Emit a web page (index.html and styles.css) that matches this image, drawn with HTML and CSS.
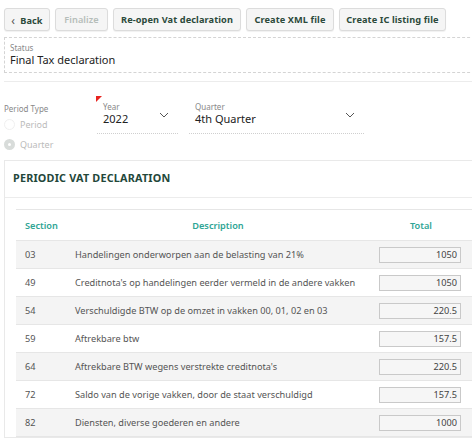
FILE: index.html
```html
<!DOCTYPE html>
<html>
<head>
<meta charset="utf-8">
<link rel="stylesheet" href="styles.css">
</head>
<body>
<div class="page">
  <div class="toolbar">
    <button class="btn b-back"><span class="chev">&#8249;</span>Back</button>
    <button class="btn b-fin disabled">Finalize</button>
    <button class="btn b-reopen">Re-open Vat declaration</button>
    <button class="btn b-xml">Create XML file</button>
    <button class="btn b-ic">Create IC listing file</button>
  </div>
  <div class="status">
    <div class="label">Status</div>
    <div class="value">Final Tax declaration</div>
  </div>
  <div class="divider"></div>
  <div class="filters">
    <div class="ptype">
      <div class="label">Period Type</div>
      <div class="radio"><span class="dot"></span>Period</div>
      <div class="radio"><span class="dot on"></span>Quarter</div>
    </div>
    <div class="field year">
      <span class="flag"></span>
      <div class="label">Year</div>
      <div class="fval">2022</div>
      <svg class="caret" width="10" height="6" viewBox="0 0 10 6"><path d="M1 1l4 4 4-4" fill="none" stroke="#555" stroke-width="1"/></svg>
    </div>
    <div class="field quarter">
      <div class="label">Quarter</div>
      <div class="fval">4th Quarter</div>
      <svg class="caret" width="10" height="6" viewBox="0 0 10 6"><path d="M1 1l4 4 4-4" fill="none" stroke="#555" stroke-width="1"/></svg>
    </div>
  </div>
  <div class="card">
    <div class="card-head">PERIODIC VAT DECLARATION</div>
    <div class="card-body">
      <table class="vat">
        <thead>
          <tr><th class="c-sec">Section</th><th class="c-desc">Description</th><th class="c-tot">Total</th></tr>
        </thead>
        <tbody>
          <tr><td>03</td><td>Handelingen onderworpen aan de belasting van 21%</td><td class="c-in"><div class="inp">1050</div></td></tr>
          <tr><td>49</td><td>Creditnota's op handelingen eerder vermeld in de andere vakken</td><td class="c-in"><div class="inp">1050</div></td></tr>
          <tr><td>54</td><td>Verschuldigde BTW op de omzet in vakken 00, 01, 02 en 03</td><td class="c-in"><div class="inp">220.5</div></td></tr>
          <tr><td>59</td><td>Aftrekbare btw</td><td class="c-in"><div class="inp">157.5</div></td></tr>
          <tr><td>64</td><td>Aftrekbare BTW wegens verstrekte creditnota's</td><td class="c-in"><div class="inp">220.5</div></td></tr>
          <tr><td>72</td><td>Saldo van de vorige vakken, door de staat verschuldigd</td><td class="c-in"><div class="inp">157.5</div></td></tr>
          <tr><td>82</td><td>Diensten, diverse goederen en andere</td><td class="c-in"><div class="inp">1000</div></td></tr>
        </tbody>
      </table>
    </div>
  </div>
</div>
</body>
</html>
```
FILE: styles.css
```css
html, body { margin: 0; padding: 0; overflow: hidden; background: #fff; }
body { font-family: "Noto Sans", "DejaVu Sans", sans-serif; color: #333; }
.page { width: 490px; padding: 8px 0 0 4px; box-sizing: border-box; }

.toolbar { display: flex; gap: 5px; height: 23px; }
.btn {
  height: 23px; padding: 0 0 1px; margin: 0; border: 1px solid #dcdcdc; border-radius: 3px;
  background: #f5f5f5; color: #2c4a3b; font-family: inherit; font-weight: 700;
  font-size: 9.2px; letter-spacing: 0.1px; box-shadow: 0 1px 1px rgba(0,0,0,0.06);
  flex: none; text-align: center;
}
.b-back { width: 46px; }
.b-fin { width: 53px; }
.b-reopen { width: 128px; }
.b-xml { width: 88px; }
.b-ic { width: 107px; }
.btn.disabled { color: #b5bdb9; font-weight: 600; }
.chev { font-weight: 400; font-size: 12px; margin-right: 5px; color: #555; position: relative; top: 1px; }

.status {
  margin-top: 6px; height: 36px; border: 1px dashed #d4d4d4; border-right: none;
  padding: 4px 0 0 5px; box-sizing: border-box;
}
.label { font-size: 8px; color: #888; }
.status .value { font-size: 11px; color: #222; margin-top: -1px; }

.divider { margin-top: 8px; border-top: 1px solid #ececec; }

.filters { display: flex; height: 78px; padding-top: 15px; box-sizing: border-box; }
.ptype { width: 93px; padding-top: 6px; }
.radio { display: flex; align-items: center; font-size: 9px; color: #bbb; height: 19px; margin-top: 1px; }
.radio .dot { width: 11px; height: 11px; border-radius: 50%; border: 1px solid #f0f0f0; margin: 0 5px 0 0; box-sizing: border-box; }
.radio .dot.on { background: #d8dcda; border: 3px solid #d8dcda; position: relative; }
.radio .dot.on::after { content: ""; position: absolute; width: 3px; height: 3px; border-radius: 50%; background: #fff; left: 1px; top: 1px; }

.field { position: relative; border-bottom: 1px dotted #cfcfcf; height: 37px; box-sizing: border-box; padding: 4px 0 0 6px; }
.field .fval { font-size: 11px; color: #222; margin-top: -1px; }
.year { width: 81px; }
.quarter { width: 175px; margin-left: 11px; }
.caret { position: absolute; top: 15px; right: 9px; }
.flag { position: absolute; left: -1px; top: -1px; width: 0; height: 0; border-top: 6px solid #e8231f; border-right: 6px solid transparent; }

.card { margin-top: 0; border: 1px solid #e9e9e9; border-right: none; }
.card-head { height: 37px; box-sizing: border-box; padding: 9px 0 0 8px; font-weight: 700; font-size: 10.8px; color: #23473a; border-bottom: 1px solid #ececec; letter-spacing: 0.2px; }
.card-body { padding: 11px 0 0 11px; }

.vat { width: 456px; border-collapse: collapse; font-size: 9.2px; color: #555; }
.vat th { height: 30px; font-weight: 600; color: #2fa595; font-size: 9.2px; border-top: 1px solid #e6e6e6; padding: 0; }
.vat th.c-sec { text-align: left; padding-left: 9px; width: 41px; }
.vat th.c-desc { text-align: center; }
.vat th.c-tot { width: 102px; text-align: center; }
.vat td { height: 27px; border-top: 1px solid #e6e6e6; padding: 0 0 0 9px; }
.vat tbody tr:nth-child(odd) td { background: #f4f4f4; }
.vat tbody tr:last-child td { border-bottom: 1px solid #e6e6e6; }
.vat td.c-in { padding: 0 11px 0 9px; }
.inp { height: 14px; line-height: 14px; border: 1px solid #c9c9c9; background: #f6f6f6; text-align: right; padding-right: 3px; color: #444; }
```
